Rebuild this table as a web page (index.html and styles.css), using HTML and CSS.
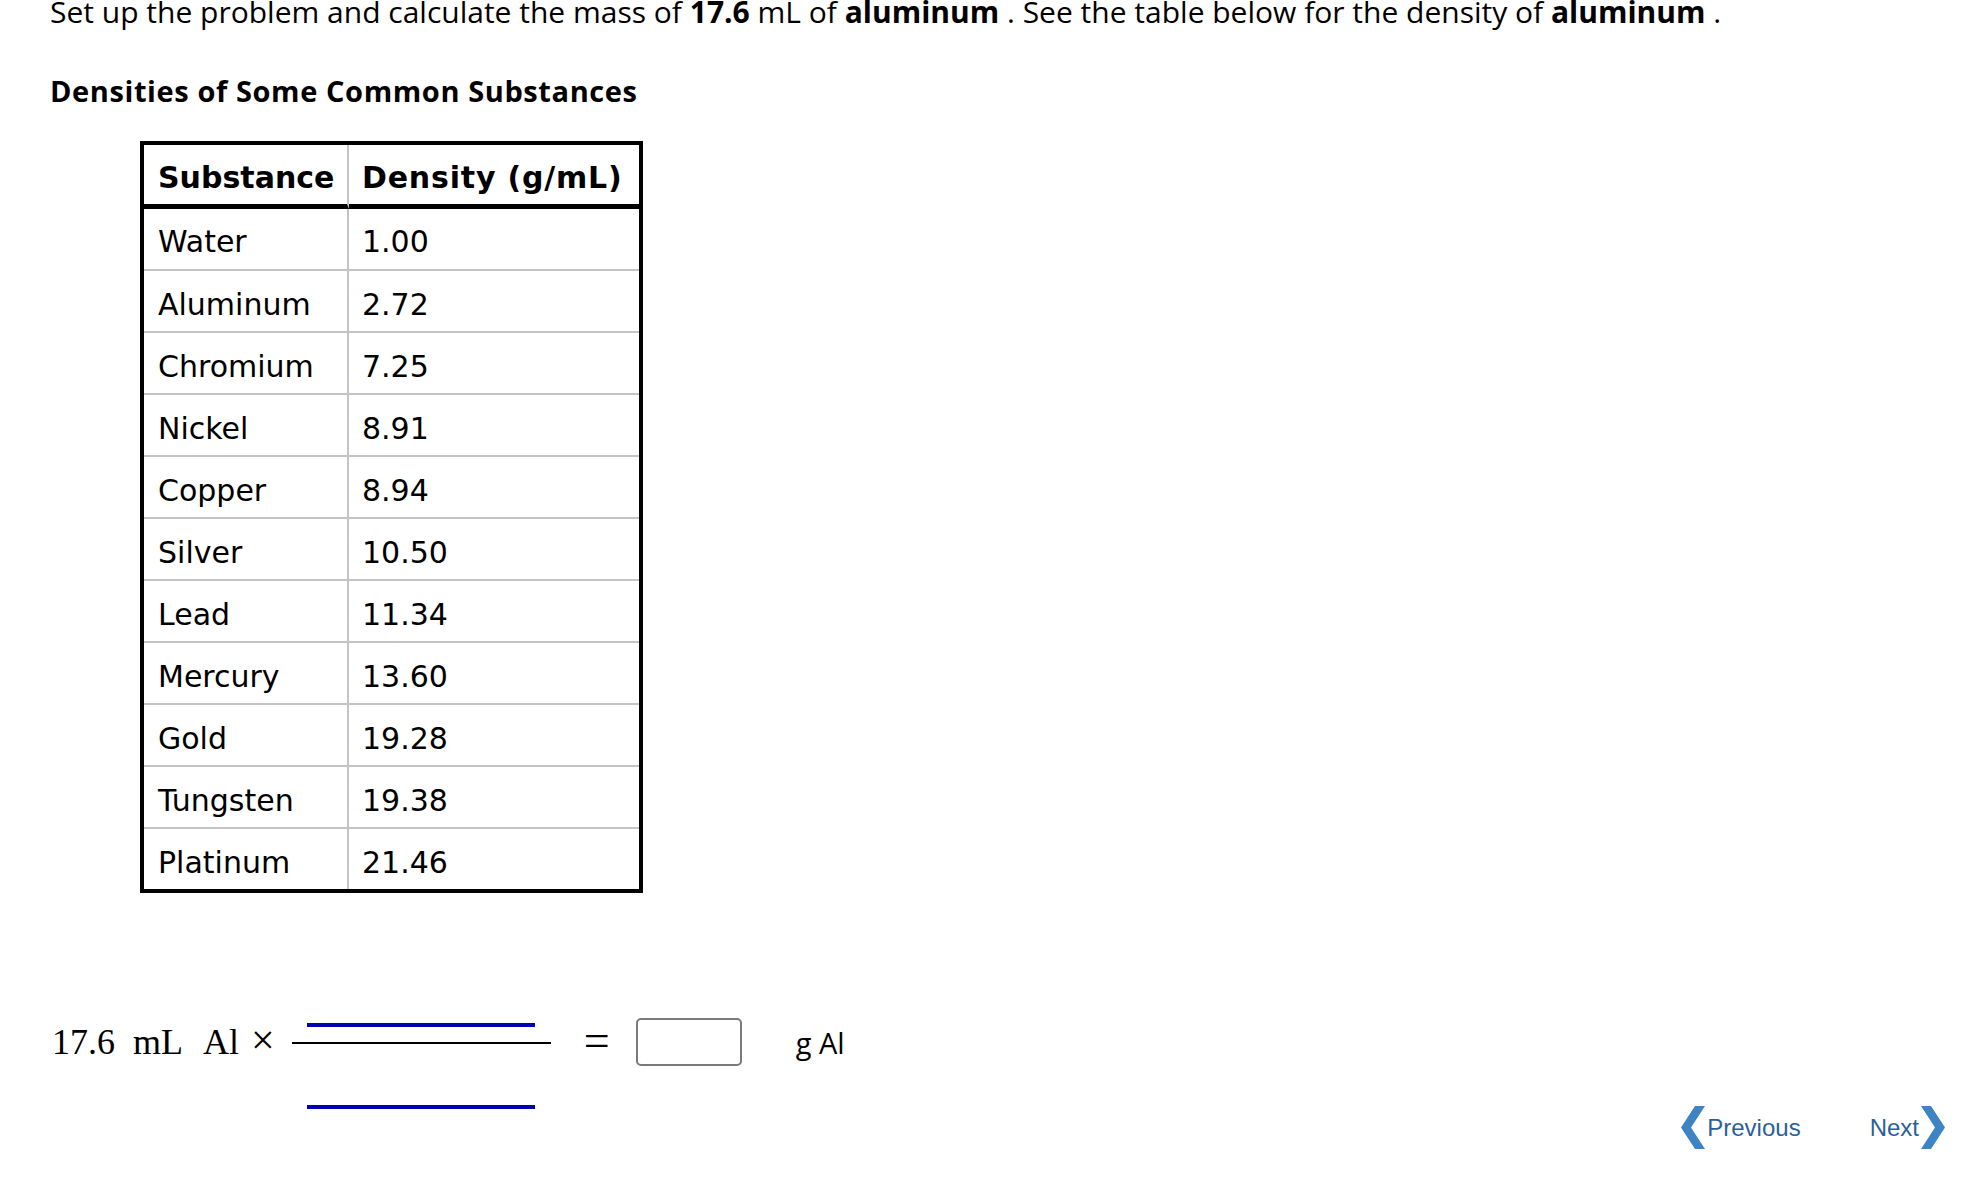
FILE: index.html
```html
<!DOCTYPE html>
<html>
<head>
<meta charset="utf-8">
<link rel="stylesheet" href="styles.css">
</head>
<body>
<div class="page">
  <p class="prompt">Set up the problem and calculate the mass of <b>17.6</b> mL of <b>aluminum</b> . See the table below for the density of <b>aluminum</b> .</p>
  <h3 class="caption">Densities of Some Common Substances</h3>
  <table class="density">
    <thead>
      <tr><th class="c1">Substance</th><th class="c2">Density (g/mL)</th></tr>
    </thead>
    <tbody>
      <tr><td class="c1">Water</td><td class="c2">1.00</td></tr>
      <tr><td class="c1">Aluminum</td><td class="c2">2.72</td></tr>
      <tr><td class="c1">Chromium</td><td class="c2">7.25</td></tr>
      <tr><td class="c1">Nickel</td><td class="c2">8.91</td></tr>
      <tr><td class="c1">Copper</td><td class="c2">8.94</td></tr>
      <tr><td class="c1">Silver</td><td class="c2">10.50</td></tr>
      <tr><td class="c1">Lead</td><td class="c2">11.34</td></tr>
      <tr><td class="c1">Mercury</td><td class="c2">13.60</td></tr>
      <tr><td class="c1">Gold</td><td class="c2">19.28</td></tr>
      <tr><td class="c1">Tungsten</td><td class="c2">19.38</td></tr>
      <tr><td class="c1">Platinum</td><td class="c2">21.46</td></tr>
    </tbody>
  </table>

  <div class="equation">
    <span class="math"><span class="m-num">17.6</span><span class="m-unit">mL</span><span class="m-el">Al</span><span class="m-times">×</span></span>
    <span class="frac">
      <span class="num"><span class="slot"></span></span>
      <span class="bar"></span>
      <span class="den"><span class="slot"></span></span>
    </span>
    <span class="eq">=</span>
    <span class="answer"></span>
    <span class="unit">g Al</span>
  </div>

  <nav class="pager">
    <a class="prev"><svg class="chev" width="24" height="43" viewBox="0 0 24 43"><polygon points="24,0 14,0 0,21.5 14,43 24,43 10,21.5"/></svg><span>Previous</span></a>
    <a class="next"><span>Next</span><svg class="chev" width="24" height="43" viewBox="0 0 24 43"><polygon points="0,0 10,0 24,21.5 10,43 0,43 14,21.5"/></svg></a>
  </nav>
</div>
</body>
</html>
```

FILE: styles.css
```css
html, body {
  margin: 0;
  padding: 0;
  background: #fff;
}

body {
  font-family: "Open Sans", "Liberation Sans", sans-serif;
  color: #000;
  overflow: hidden;
}

.page {
  padding-left: 50px;
}

.prompt {
  margin: -6px 0 0 0;
  font-size: 30px;
  line-height: 36px;
  white-space: nowrap;
}

.prompt b {
  font-weight: 700;
}

.caption {
  margin: 44px 0 0 0;
  font-size: 29px;
  line-height: 34px;
  letter-spacing: 0.6px;
  font-weight: 700;
}

.density {
  margin: 33px 0 0 90px;
  border-collapse: separate;
  border-spacing: 0;
  border: 4px solid #000;
  font-family: "DejaVu Sans", Verdana, sans-serif;
  font-size: 30px;
  color: #000;
}

.density th,
.density td {
  text-align: left;
  vertical-align: middle;
  padding: 0;
  box-sizing: border-box;
}

.density .c1 {
  width: 205px;
  padding-left: 14px;
  border-right: 2px solid #c4c4c4;
}

.density .c2 {
  width: 290px;
  padding-left: 13px;
}

.density th {
  height: 64px;
  padding-top: 5px;
  border-bottom: 5px solid #000;
  font-weight: 700;
}

.density th.c2 {
  letter-spacing: 0.8px;
}

.density td {
  height: 60px;
  padding-top: 4px;
}

.density tbody tr + tr td {
  height: 62px;
  padding-top: 6px;
  border-top: 2px solid #c4c4c4;
}

.equation {
  display: flex;
  align-items: center;
  margin-top: 84px;
  height: 132px;
}

.math {
  font-family: "Liberation Serif", "DejaVu Serif", serif;
  font-size: 36px;
  line-height: 40px;
  padding-bottom: 4px;
  margin-left: 2px;
  display: flex;
  align-items: baseline;
}

.m-unit {
  margin-left: 18px;
}

.m-el {
  margin-left: 20px;
}

.m-times {
  margin-left: 12px;
  font-size: 42px;
}

.frac {
  display: flex;
  flex-direction: column;
  align-items: center;
  width: 259px;
  margin-left: 17px;
}

.num,
.den {
  height: 65px;
  display: flex;
  justify-content: center;
  width: 100%;
}

.num {
  align-items: flex-end;
}

.den {
  align-items: flex-end;
}

.num .slot {
  margin-bottom: 15px;
}

.slot {
  display: block;
  width: 228px;
  height: 4px;
  background: #0000b4;
}

.bar {
  display: block;
  width: 259px;
  height: 2px;
  background: #000;
}

.eq {
  font-family: "Liberation Serif", serif;
  font-size: 46px;
  line-height: 46px;
  margin-left: 33px;
  padding-bottom: 4px;
}

.answer {
  display: block;
  width: 106px;
  height: 48px;
  box-sizing: border-box;
  border: 2px solid #7a7a7a;
  border-radius: 5px;
  margin-left: 26px;
  margin-top: -3px;
}

.unit {
  font-family: "Open Sans", sans-serif;
  font-size: 29px;
  margin-left: 54px;
  padding-bottom: 2px;
}

.pager {
  display: flex;
  justify-content: flex-end;
  align-items: center;
  margin-top: -3px;
  padding-right: 19px;
  font-family: "Liberation Sans", Arial, sans-serif;
  font-size: 24px;
  color: #2c5f99;
}

.pager a {
  display: flex;
  align-items: center;
}

.prev span {
  margin-left: 2px;
}

.next {
  margin-left: 69px;
}

.next span {
  margin-right: 2px;
}

.chev {
  display: block;
  fill: #3d84c4;
}
```
